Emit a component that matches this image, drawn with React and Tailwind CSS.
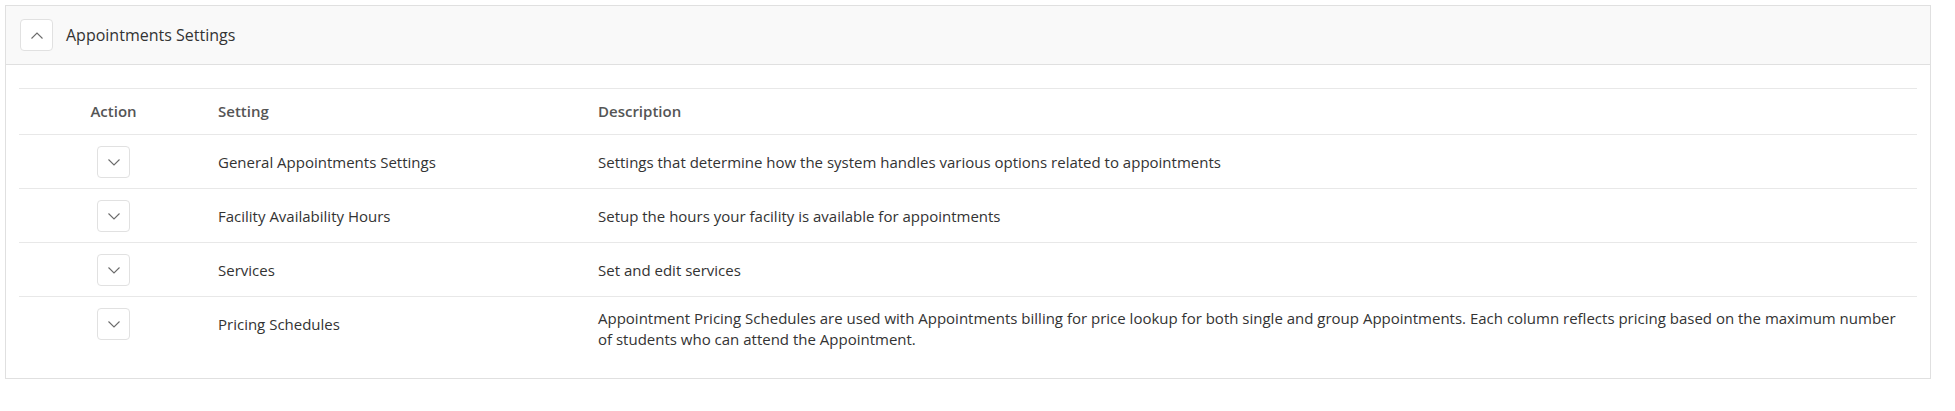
const rows = [
  {
    name: "General Appointments Settings",
    desc: "Settings that determine how the system handles various options related to appointments",
  },
  {
    name: "Facility Availability Hours",
    desc: "Setup the hours your facility is available for appointments",
  },
  { name: "Services", desc: "Set and edit services" },
  {
    name: "Pricing Schedules",
    desc: "Appointment Pricing Schedules are used with Appointments billing for price lookup for both single and group Appointments. Each column reflects pricing based on the maximum number of students who can attend the Appointment.",
  },
];

function Chevron({ up }) {
  return (
    <svg width="12" height="7" viewBox="0 0 12 7" fill="none" stroke="#6b6b6b" strokeWidth="1.1">
      {up ? <path d="M0.5 6.5 L6 1 L11.5 6.5" /> : <path d="M0.5 0.5 L6 6 L11.5 0.5" />}
    </svg>
  );
}

function ToggleButton({ up }) {
  return (
    <button className="w-[33px] h-[32px] shrink-0 flex items-center justify-center bg-white border border-[#e1e1e1] rounded-[4px]">
      <Chevron up={up} />
    </button>
  );
}

export default function App() {
  return (
    <div className="bg-white w-[1955px] h-[411px] pt-[5px] pl-[5px]" style={{ fontFamily: '"Open Sans", sans-serif' }}>
      <div className="w-[1926px] border border-[#e0e0e0]">
        <div className="h-[59px] bg-[#f9f9f9] border-b border-[#e0e0e0] flex items-center pl-[14px] gap-[13px]">
          <ToggleButton up />
          <span className="text-[16px] text-[#333]">Appointments Settings</span>
        </div>
        <div className="px-[13px] pt-[23px] pb-[18px] text-[15px] text-[#333]">
          <div className="flex items-center h-[47px] border-t border-b border-[#e8e8e8] font-semibold text-[#555]">
            <div className="w-[189px] text-center">Action</div>
            <div className="w-[380px] pl-[10px]">Setting</div>
            <div className="flex-1 pl-[10px]">Description</div>
          </div>
          {rows.map((r, i) => (
            <div
              key={r.name}
              className={"flex items-start pt-[11px] pb-[10px] leading-[21px] " + (i < rows.length - 1 ? "border-b border-[#e8e8e8]" : "")}
            >
              <div className="w-[189px] flex justify-center">
                <ToggleButton />
              </div>
              <div className="w-[380px] pl-[10px] min-h-[32px] flex items-center">{r.name}</div>
              <div className="flex-1 pl-[10px] pr-[10px] min-h-[32px] flex items-center">{r.desc}</div>
            </div>
          ))}
        </div>
      </div>
    </div>
  );
}
